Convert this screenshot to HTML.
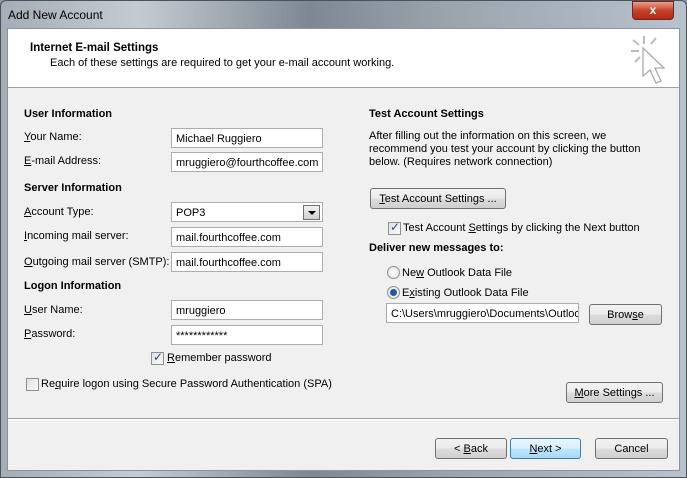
<!DOCTYPE html>
<html><head><style>
*{box-sizing:border-box;margin:0;padding:0}
body{width:687px;height:478px;overflow:hidden;font-family:"Liberation Sans",sans-serif;font-size:11px;color:#000;position:relative;background:#8f9aa5}
.frame{position:absolute;left:0;top:0;width:687px;height:478px;background:linear-gradient(90deg,#a4adb5,#c4ccd3 20%,#7e8892 45%,#9aa4ad 65%,#b8c2cc);border:1px solid #4a525a;border-radius:6px 6px 0 0}
.a{position:absolute;white-space:nowrap;padding-top:2px}
.b{font-weight:bold}
.in{position:absolute;background:#fff;border:1px solid #abadb3;height:20px;padding:4px 4px 0;white-space:nowrap;overflow:hidden}
.btn{position:absolute;border:1px solid #707070;border-radius:3px;background:linear-gradient(#f2f2f2,#ebebeb 50%,#dddddd 51%,#cfcfcf);text-align:center;line-height:21px;height:21px}
.cb{position:absolute;width:13px;height:13px;border:1px solid #8f8f8f;background:linear-gradient(135deg,#e0e0e0,#fafafa);margin-top:1px}
.rd{position:absolute;width:13px;height:13px;border:1px solid #8f8f8f;border-radius:50%;background:radial-gradient(#fff,#ddd);margin-top:1px}
u{text-decoration:underline}
</style></head><body>
<div class="frame"></div>
<div class="a" style="left:8px;top:6px;font-size:12px;color:#000">Add New Account</div>
<div style="position:absolute;left:632px;top:1px;width:42px;height:19px;border:1px solid #6b2a1f;border-radius:0 0 4px 4px;background:linear-gradient(#e8a08f,#c7412a 50%,#b32a14);color:#fff;font-weight:bold;text-align:center;line-height:17px;font-size:12px">x</div>
<div style="position:absolute;left:7px;top:28px;width:673px;height:443px;background:#f0f0f0;border:1px solid #8a949e"></div>
<div style="position:absolute;left:8px;top:29px;width:671px;height:59px;background:#fff;border-bottom:1px solid #a0a0a0"></div>
<div class="a b" style="left:30px;top:40px;font-size:11.5px">Internet E-mail Settings</div>
<div class="a" style="left:50px;top:55px">Each of these settings are required to get your e-mail account working.</div>
<svg class="a" style="left:630px;top:34px;padding:0" width="38" height="52" viewBox="0 0 38 52"><g stroke="#bbb" stroke-width="2" fill="none"><path d="M14 2v8M3 6l6 5M1 17h8M26 4l-5 6M5 28l5-5"/></g><path d="M13 14l0 28 7-6 6 13 5-2-6-13 9 0z" fill="#fff" stroke="#aaa" stroke-width="1.3"/></svg>

<div class="a b" style="left:24px;top:106px">User Information</div>
<div class="a" style="left:24px;top:129px"><u>Y</u>our Name:</div>
<div class="a" style="left:24px;top:153px"><u>E</u>-mail Address:</div>
<div class="a b" style="left:24px;top:180px">Server Information</div>
<div class="a" style="left:24px;top:204px"><u>A</u>ccount Type:</div>
<div class="a" style="left:24px;top:228px"><u>I</u>ncoming mail server:</div>
<div class="a" style="left:24px;top:254px"><u>O</u>utgoing mail server (SMTP):</div>
<div class="a b" style="left:24px;top:278px">Logon Information</div>
<div class="a" style="left:24px;top:302px"><u>U</u>ser Name:</div>
<div class="a" style="left:24px;top:326px"><u>P</u>assword:</div>

<div class="in" style="left:171px;top:128px;width:152px">Michael Ruggiero</div>
<div class="in" style="left:171px;top:152px;width:152px">mruggiero@fourthcoffee.com</div>
<div class="in" style="left:171px;top:202px;width:152px">POP3</div>
<div style="position:absolute;left:303px;top:205px;width:17px;height:15px;border:1px solid #707070;background:linear-gradient(#f2f2f2,#d0d0d0)"><div style="margin:5px auto 0;width:0;height:0;border-left:4px solid transparent;border-right:4px solid transparent;border-top:4px solid #000"></div></div>
<div class="in" style="left:171px;top:227px;width:152px">mail.fourthcoffee.com</div>
<div class="in" style="left:171px;top:252px;width:152px">mail.fourthcoffee.com</div>
<div class="in" style="left:171px;top:300px;width:152px">mruggiero</div>
<div class="in" style="left:171px;top:325px;width:152px">************</div>

<div class="cb" style="left:151px;top:351px"><span style="position:absolute;left:1px;top:-3px;color:#2a4b8a;font-size:12px">✓</span></div>
<div class="a" style="left:167px;top:350px"><u>R</u>emember password</div>
<div class="cb" style="left:26px;top:377px"></div>
<div class="a" style="left:41px;top:376px">Re<u>q</u>uire logon using Secure Password Authentication (SPA)</div>

<div class="a b" style="left:369px;top:106px">Test Account Settings</div>
<div class="a" style="left:369px;top:128px;line-height:13px">After filling out the information on this screen, we<br>recommend you test your account by clicking the button<br>below. (Requires network connection)</div>
<div class="btn" style="left:370px;top:188px;width:136px"><u>T</u>est Account Settings ...</div>
<div class="cb" style="left:388px;top:221px"><span style="position:absolute;left:1px;top:-3px;color:#2a4b8a;font-size:12px">✓</span></div>
<div class="a" style="left:403px;top:220px">Test Account <u>S</u>ettings by clicking the Next button</div>
<div class="a b" style="left:369px;top:240px">Deliver new messages to:</div>
<div class="rd" style="left:387px;top:265px"></div>
<div class="a" style="left:402px;top:265px">Ne<u>w</u> Outlook Data File</div>
<div class="rd" style="left:387px;top:285px"><div style="width:7px;height:7px;border-radius:50%;background:#1c5aa6;margin:2px"></div></div>
<div class="a" style="left:402px;top:285px">E<u>x</u>isting Outlook Data File</div>
<div class="in" style="left:386px;top:303px;width:193px">C:\Users\mruggiero\Documents\Outlook</div>
<div class="btn" style="left:589px;top:304px;width:73px">Brow<u>s</u>e</div>
<div class="btn" style="left:566px;top:382px;width:97px"><u>M</u>ore Settings ...</div>

<div style="position:absolute;left:8px;top:418px;width:671px;border-top:1px solid #a0a0a0;border-bottom:1px solid #fff"></div>
<div class="btn" style="left:435px;top:438px;width:72px">&lt; <u>B</u>ack</div>
<div class="btn" style="left:510px;top:438px;width:71px;border-color:#3c7fb1;background:linear-gradient(#eaf6fd,#d9f0fc 50%,#bee6fd 51%,#a7d9f5)"><u>N</u>ext &gt;</div>
<div class="btn" style="left:595px;top:438px;width:73px">Cancel</div>
</body></html>
